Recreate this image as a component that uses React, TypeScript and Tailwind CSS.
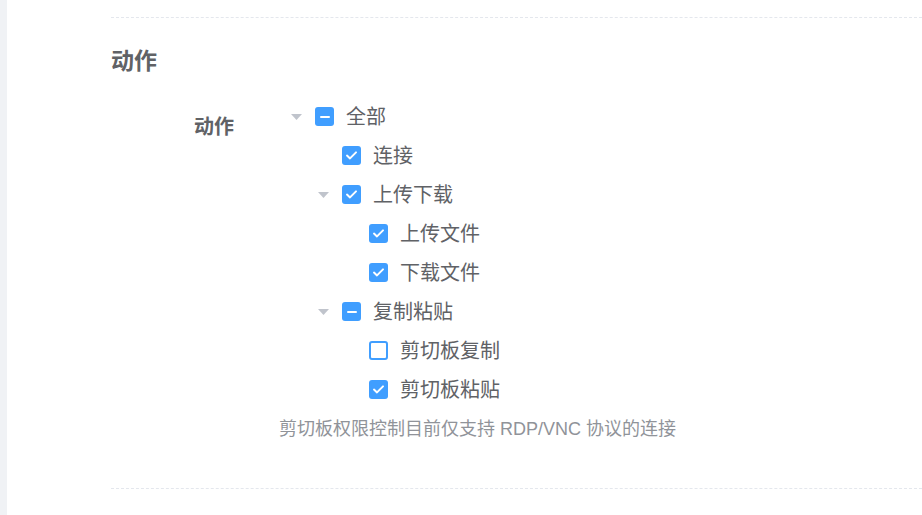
import React from "react"

type Node = {
  label: string
  level: number
  state: "checked" | "half" | "empty"
  caret?: boolean
}

const nodes: Node[] = [
  { label: "全部", level: 0, state: "half", caret: true },
  { label: "连接", level: 1, state: "checked" },
  { label: "上传下载", level: 1, state: "checked", caret: true },
  { label: "上传文件", level: 2, state: "checked" },
  { label: "下载文件", level: 2, state: "checked" },
  { label: "复制粘贴", level: 1, state: "half", caret: true },
  { label: "剪切板复制", level: 2, state: "empty" },
  { label: "剪切板粘贴", level: 2, state: "checked" },
]

function Box({ state }: { state: Node["state"] }) {
  if (state === "empty") {
    return <span className="w-[19px] h-[19px] rounded-[3px] border-2 border-[#409eff] bg-white shrink-0" />
  }
  return (
    <span className="w-[19px] h-[19px] rounded-[3px] bg-[#409eff] flex items-center justify-center shrink-0">
      {state === "checked" ? (
        <svg width="13" height="11" viewBox="0 0 13 11">
          <path d="M2 5.6 L5 8.4 L11 2.4" fill="none" stroke="#fff" strokeWidth="2" strokeLinecap="round" strokeLinejoin="round" />
        </svg>
      ) : (
        <span className="w-[10px] h-[2px] bg-white rounded-sm" />
      )}
    </span>
  )
}

function Row({ node }: { node: Node }) {
  const indent = node.level === 0 ? "pl-[7px]" : node.level === 1 ? "pl-[34px]" : "pl-[61px]"
  return (
    <div className={`flex items-center h-[39px] ${indent}`}>
      <span className="ml-[5px] w-[11px] mr-[13px] flex justify-center">
        {node.caret && (
          <svg width="11" height="6" viewBox="0 0 11 6">
            <path d="M0 0 H11 L5.5 6 Z" fill="#c0c4cc" />
          </svg>
        )}
      </span>
      <Box state={node.state} />
      <span className="ml-[12px] text-[20px] text-[#606266] leading-none">{node.label}</span>
    </div>
  )
}

export default function App() {
  return (
    <div
      className="w-[922px] h-[515px] flex bg-white overflow-hidden"
      style={{ fontFamily: '"Liberation Sans", "Noto Sans CJK SC", sans-serif' }}
    >
      <div className="w-[7px] bg-[#f0f2f5] shrink-0" />
      <div className="flex-1 pl-[104px]">
        <div className="h-[17px]" />
        <div className="border-t border-dashed border-[#e4e7ed]">
          <h2 className="mt-[28px] text-[23px] font-bold text-[#606266] leading-[30px]">动作</h2>
          <div className="flex mt-[21px]">
            <div className="w-[168px] pl-[83px] pt-[20px] text-[20px] font-bold text-[#606266] leading-none">动作</div>
            <div className="flex flex-col">
              {nodes.map((n) => (
                <Row key={n.label} node={n} />
              ))}
              <p className="mt-[8px] text-[18px] text-[#909399] leading-[24px]">
                剪切板权限控制目前仅支持 RDP/VNC 协议的连接
              </p>
            </div>
          </div>
        </div>
        <div className="mt-[47px] border-t border-dashed border-[#e4e7ed]" />
      </div>
    </div>
  )
}
